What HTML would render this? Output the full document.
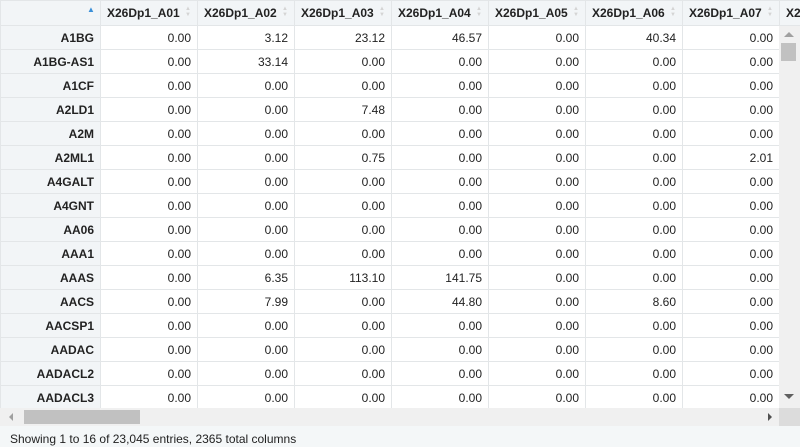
<!DOCTYPE html><html><head><style>
body{margin:0;width:800px;height:447px;overflow:hidden;background:#f4f7f8;font-family:"Liberation Sans",sans-serif;font-size:12px;color:#222;position:relative}
.wrap{position:absolute;left:0;top:0;width:800px;height:408px;overflow:hidden;background:#fff}
table{border-collapse:collapse;table-layout:fixed;position:absolute;left:0;top:0;width:876px}
td,th{height:23px;border:1px solid #e3e6e8;padding:0 6px 0 6px;white-space:nowrap;overflow:hidden;box-sizing:border-box}
th{background:#f2f5f7;font-weight:bold;text-align:left;position:relative;height:25px}
th .s{position:absolute;right:6px;top:5px;color:#d4d4d4;font-size:6px;line-height:6px}
td{text-align:right;height:24px}
td.r{background:#f2f5f7;font-weight:bold;text-align:right}
.vs{position:absolute;left:779px;top:26px;width:21px;height:382px;background:#f0f0f0}
.hs{position:absolute;left:0;top:408px;width:779px;height:18px;background:#f0f0f0}
.sq{position:absolute;left:779px;top:408px;width:21px;height:18px;background:#dcdcdc}
</style></head><body>
<div class="wrap"><table>
<colgroup><col style="width:100px"><col style="width:97px"><col style="width:97px"><col style="width:97px"><col style="width:97px"><col style="width:97px"><col style="width:97px"><col style="width:97px"><col style="width:97px"></colgroup>
<tr><th><span style="position:absolute;left:86px;top:4px;color:#3a8fd8;font-size:8px">▲</span></th><th>X26Dp1_A01<span class="s">▲<br>▼</span></th><th>X26Dp1_A02<span class="s">▲<br>▼</span></th><th>X26Dp1_A03<span class="s">▲<br>▼</span></th><th>X26Dp1_A04<span class="s">▲<br>▼</span></th><th>X26Dp1_A05<span class="s">▲<br>▼</span></th><th>X26Dp1_A06<span class="s">▲<br>▼</span></th><th>X26Dp1_A07<span class="s">▲<br>▼</span></th><th>X26Dp1_A08</th></tr>
<tr><td class="r">A1BG</td><td>0.00</td><td>3.12</td><td>23.12</td><td>46.57</td><td>0.00</td><td>40.34</td><td>0.00</td><td></td></tr>
<tr><td class="r">A1BG-AS1</td><td>0.00</td><td>33.14</td><td>0.00</td><td>0.00</td><td>0.00</td><td>0.00</td><td>0.00</td><td></td></tr>
<tr><td class="r">A1CF</td><td>0.00</td><td>0.00</td><td>0.00</td><td>0.00</td><td>0.00</td><td>0.00</td><td>0.00</td><td></td></tr>
<tr><td class="r">A2LD1</td><td>0.00</td><td>0.00</td><td>7.48</td><td>0.00</td><td>0.00</td><td>0.00</td><td>0.00</td><td></td></tr>
<tr><td class="r">A2M</td><td>0.00</td><td>0.00</td><td>0.00</td><td>0.00</td><td>0.00</td><td>0.00</td><td>0.00</td><td></td></tr>
<tr><td class="r">A2ML1</td><td>0.00</td><td>0.00</td><td>0.75</td><td>0.00</td><td>0.00</td><td>0.00</td><td>2.01</td><td></td></tr>
<tr><td class="r">A4GALT</td><td>0.00</td><td>0.00</td><td>0.00</td><td>0.00</td><td>0.00</td><td>0.00</td><td>0.00</td><td></td></tr>
<tr><td class="r">A4GNT</td><td>0.00</td><td>0.00</td><td>0.00</td><td>0.00</td><td>0.00</td><td>0.00</td><td>0.00</td><td></td></tr>
<tr><td class="r">AA06</td><td>0.00</td><td>0.00</td><td>0.00</td><td>0.00</td><td>0.00</td><td>0.00</td><td>0.00</td><td></td></tr>
<tr><td class="r">AAA1</td><td>0.00</td><td>0.00</td><td>0.00</td><td>0.00</td><td>0.00</td><td>0.00</td><td>0.00</td><td></td></tr>
<tr><td class="r">AAAS</td><td>0.00</td><td>6.35</td><td>113.10</td><td>141.75</td><td>0.00</td><td>0.00</td><td>0.00</td><td></td></tr>
<tr><td class="r">AACS</td><td>0.00</td><td>7.99</td><td>0.00</td><td>44.80</td><td>0.00</td><td>8.60</td><td>0.00</td><td></td></tr>
<tr><td class="r">AACSP1</td><td>0.00</td><td>0.00</td><td>0.00</td><td>0.00</td><td>0.00</td><td>0.00</td><td>0.00</td><td></td></tr>
<tr><td class="r">AADAC</td><td>0.00</td><td>0.00</td><td>0.00</td><td>0.00</td><td>0.00</td><td>0.00</td><td>0.00</td><td></td></tr>
<tr><td class="r">AADACL2</td><td>0.00</td><td>0.00</td><td>0.00</td><td>0.00</td><td>0.00</td><td>0.00</td><td>0.00</td><td></td></tr>
<tr><td class="r">AADACL3</td><td>0.00</td><td>0.00</td><td>0.00</td><td>0.00</td><td>0.00</td><td>0.00</td><td>0.00</td><td></td></tr>
</table></div>
<div class="vs"><div style="position:absolute;left:5px;top:6px;width:0;height:0;border:5px solid transparent;border-bottom:5px solid #a0a0a0;border-top:0"></div><div style="position:absolute;left:2px;top:17px;width:15px;height:18px;background:#c1c1c1"></div><div style="position:absolute;left:5px;top:368px;border:5px solid transparent;border-top:5px solid #606060;border-bottom:0"></div></div>
<div class="hs"><div style="position:absolute;left:9px;top:5px;border:4px solid transparent;border-right:4px solid #a0a0a0;border-left:0"></div><div style="position:absolute;left:24px;top:2px;width:116px;height:14px;background:#c1c1c1"></div><div style="position:absolute;left:768px;top:5px;border:4px solid transparent;border-left:4px solid #505050;border-right:0"></div></div>
<div class="sq"></div>
<div style="position:absolute;left:10px;top:432px;font-size:12px;color:#222">Showing 1 to 16 of 23,045 entries, 2365 total columns</div>
</body></html>
